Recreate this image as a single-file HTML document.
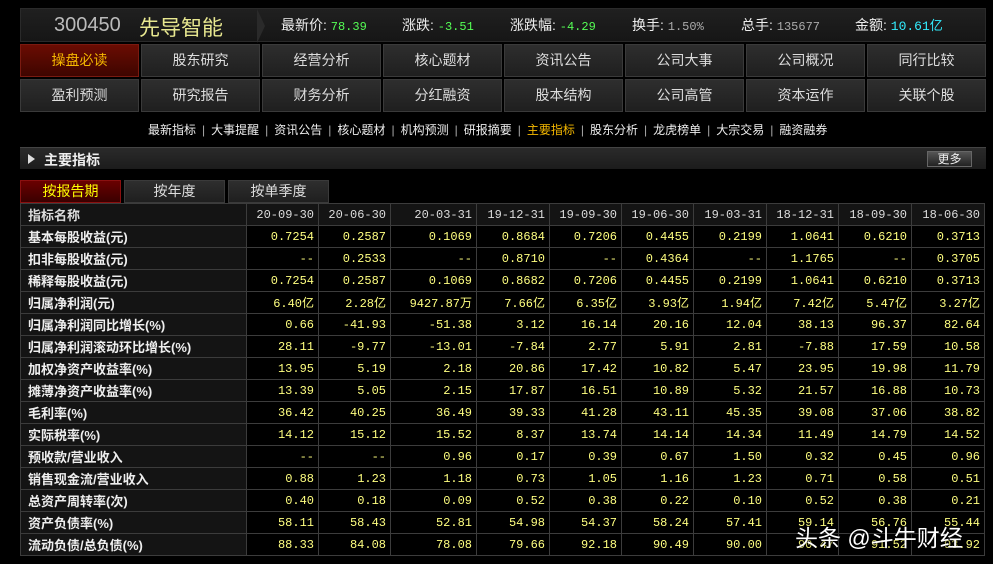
<!DOCTYPE html>
<html><head><meta charset="utf-8"><style>
*{margin:0;padding:0;box-sizing:border-box}
body{width:993px;height:564px;background:#000;overflow:hidden;font-family:"Liberation Sans","Noto Sans CJK SC",sans-serif;color:#ddd;position:relative}
.hdr{position:absolute;left:20px;top:8px;width:966px;height:34px;background:linear-gradient(#202020,#161616);border:1px solid #2a2a2a}
.code{position:absolute;left:33px;top:5px;font-size:20px;color:#bbb}
.name{position:absolute;left:118px;top:3px;font-size:21px;color:#e8e890}
.arrow{position:absolute;left:230px;top:0;width:0;height:0;border-top:17px solid transparent;border-bottom:17px solid transparent;border-left:8px solid #2a2a2a}
.q{position:absolute;top:15px;font-size:14px;color:#eee;white-space:nowrap}
.q b{font-weight:normal;font-family:"Liberation Mono",monospace;font-size:12px}
.btn{position:absolute;width:119px;height:33px;background:linear-gradient(#2e2e2e,#1f1f1f);border:1px solid #3a3a3a;color:#ddd;font-size:14px;text-align:center;line-height:31px}
.btn.act{background:linear-gradient(#6a0c02,#3e0500);border-color:#7a1a10;color:#f5b800}
.links{position:absolute;top:121px;left:148px;font-size:12px;color:#eee;white-space:nowrap}
.links span.s{color:#aaa;margin:0 6px}
.sec{position:absolute;left:20px;top:147px;width:966px;height:22px;background:linear-gradient(#2a2a2a,#1c1c1c);border-top:1px solid #444}
.sec .t{position:absolute;left:24px;top:2px;font-size:14px;font-weight:bold;color:#eee}
.sec .tri{position:absolute;left:8px;top:6px;border-top:5px solid transparent;border-bottom:5px solid transparent;border-left:7px solid #ddd}
.more{position:absolute;left:927px;top:151px;width:45px;height:16px;background:linear-gradient(#555,#222);border:1px solid #666;font-size:12px;color:#eee;text-align:center;line-height:14px}
.tab{position:absolute;top:180px;height:23px;width:101px;background:linear-gradient(#2e2e2e,#1f1f1f);border:1px solid #3a3a3a;font-size:14px;text-align:center;line-height:21px;color:#ddd}
.tab.act{background:linear-gradient(#6a0000,#3a0000);border-color:#8a1010;color:#ff0}
table{position:absolute;left:20px;top:203px;border-collapse:collapse;table-layout:fixed}
td{border:1px solid #3c3c3c;height:22px;font-size:12px;font-family:"Liberation Mono",monospace;color:#ffff80;text-align:right;padding-right:4px;background:#000;white-space:nowrap}
td.l{background:#141414;color:#eee;font-weight:bold;font-family:"Liberation Sans","Noto Sans CJK SC",sans-serif;font-size:13px;text-align:left;padding-left:7px}
tr.h td{color:#ddd;background:#141414}
.wm{position:absolute;left:795px;top:519px;font-size:23px;color:#fff;text-shadow:0 0 3px #000;white-space:nowrap}
</style></head><body>
<div class="hdr"><div class="code">300450</div><div class="name">先导智能</div><div class="arrow" style="left:236px"></div></div>
<div class="q" style="left:281px">最新价: <b style="color:#5f5">78.39</b></div>
<div class="q" style="left:402px">涨跌: <b style="color:#5f5">-3.51</b></div>
<div class="q" style="left:510px">涨跌幅: <b style="color:#5f5">-4.29</b></div>
<div class="q" style="left:632px">换手: <b style="color:#aaa">1.50%</b></div>
<div class="q" style="left:741px">总手: <b style="color:#aaa">135677</b></div>
<div class="q" style="left:855px">金额: <b style="color:#3ef;font-size:13px">10.61亿</b></div>

<div class="btn act" style="left:20px;top:44px">操盘必读</div>
<div class="btn" style="left:141px;top:44px">股东研究</div>
<div class="btn" style="left:262px;top:44px">经营分析</div>
<div class="btn" style="left:383px;top:44px">核心题材</div>
<div class="btn" style="left:504px;top:44px">资讯公告</div>
<div class="btn" style="left:625px;top:44px">公司大事</div>
<div class="btn" style="left:746px;top:44px">公司概况</div>
<div class="btn" style="left:867px;top:44px">同行比较</div>
<div class="btn" style="left:20px;top:79px">盈利预测</div>
<div class="btn" style="left:141px;top:79px">研究报告</div>
<div class="btn" style="left:262px;top:79px">财务分析</div>
<div class="btn" style="left:383px;top:79px">分红融资</div>
<div class="btn" style="left:504px;top:79px">股本结构</div>
<div class="btn" style="left:625px;top:79px">公司高管</div>
<div class="btn" style="left:746px;top:79px">资本运作</div>
<div class="btn" style="left:867px;top:79px">关联个股</div>

<div class="links">最新指标<span class="s">|</span>大事提醒<span class="s">|</span>资讯公告<span class="s">|</span>核心题材<span class="s">|</span>机构预测<span class="s">|</span>研报摘要<span class="s">|</span><span style="color:#f5b800">主要指标</span><span class="s">|</span>股东分析<span class="s">|</span>龙虎榜单<span class="s">|</span>大宗交易<span class="s">|</span>融资融券</div>

<div class="sec"><div class="tri"></div><div class="t">主要指标</div></div>
<div class="more">更多</div>

<div class="tab act" style="left:20px">按报告期</div>
<div class="tab" style="left:124px">按年度</div>
<div class="tab" style="left:228px">按单季度</div>

<table>
<colgroup><col style="width:226px"><col style="width:72px"><col style="width:72px"><col style="width:86px"><col style="width:73px"><col style="width:72px"><col style="width:72px"><col style="width:73px"><col style="width:72px"><col style="width:73px"><col style="width:73px"></colgroup>
<tr class="h"><td class="l">指标名称</td><td>20-09-30</td><td>20-06-30</td><td>20-03-31</td><td>19-12-31</td><td>19-09-30</td><td>19-06-30</td><td>19-03-31</td><td>18-12-31</td><td>18-09-30</td><td>18-06-30</td></tr>
<tr><td class="l">基本每股收益(元)</td><td>0.7254</td><td>0.2587</td><td>0.1069</td><td>0.8684</td><td>0.7206</td><td>0.4455</td><td>0.2199</td><td>1.0641</td><td>0.6210</td><td>0.3713</td></tr>
<tr><td class="l">扣非每股收益(元)</td><td>--</td><td>0.2533</td><td>--</td><td>0.8710</td><td>--</td><td>0.4364</td><td>--</td><td>1.1765</td><td>--</td><td>0.3705</td></tr>
<tr><td class="l">稀释每股收益(元)</td><td>0.7254</td><td>0.2587</td><td>0.1069</td><td>0.8682</td><td>0.7206</td><td>0.4455</td><td>0.2199</td><td>1.0641</td><td>0.6210</td><td>0.3713</td></tr>
<tr><td class="l">归属净利润(元)</td><td>6.40亿</td><td>2.28亿</td><td>9427.87万</td><td>7.66亿</td><td>6.35亿</td><td>3.93亿</td><td>1.94亿</td><td>7.42亿</td><td>5.47亿</td><td>3.27亿</td></tr>
<tr><td class="l">归属净利润同比增长(%)</td><td>0.66</td><td>-41.93</td><td>-51.38</td><td>3.12</td><td>16.14</td><td>20.16</td><td>12.04</td><td>38.13</td><td>96.37</td><td>82.64</td></tr>
<tr><td class="l">归属净利润滚动环比增长(%)</td><td>28.11</td><td>-9.77</td><td>-13.01</td><td>-7.84</td><td>2.77</td><td>5.91</td><td>2.81</td><td>-7.88</td><td>17.59</td><td>10.58</td></tr>
<tr><td class="l">加权净资产收益率(%)</td><td>13.95</td><td>5.19</td><td>2.18</td><td>20.86</td><td>17.42</td><td>10.82</td><td>5.47</td><td>23.95</td><td>19.98</td><td>11.79</td></tr>
<tr><td class="l">摊薄净资产收益率(%)</td><td>13.39</td><td>5.05</td><td>2.15</td><td>17.87</td><td>16.51</td><td>10.89</td><td>5.32</td><td>21.57</td><td>16.88</td><td>10.73</td></tr>
<tr><td class="l">毛利率(%)</td><td>36.42</td><td>40.25</td><td>36.49</td><td>39.33</td><td>41.28</td><td>43.11</td><td>45.35</td><td>39.08</td><td>37.06</td><td>38.82</td></tr>
<tr><td class="l">实际税率(%)</td><td>14.12</td><td>15.12</td><td>15.52</td><td>8.37</td><td>13.74</td><td>14.14</td><td>14.34</td><td>11.49</td><td>14.79</td><td>14.52</td></tr>
<tr><td class="l">预收款/营业收入</td><td>--</td><td>--</td><td>0.96</td><td>0.17</td><td>0.39</td><td>0.67</td><td>1.50</td><td>0.32</td><td>0.45</td><td>0.96</td></tr>
<tr><td class="l">销售现金流/营业收入</td><td>0.88</td><td>1.23</td><td>1.18</td><td>0.73</td><td>1.05</td><td>1.16</td><td>1.23</td><td>0.71</td><td>0.58</td><td>0.51</td></tr>
<tr><td class="l">总资产周转率(次)</td><td>0.40</td><td>0.18</td><td>0.09</td><td>0.52</td><td>0.38</td><td>0.22</td><td>0.10</td><td>0.52</td><td>0.38</td><td>0.21</td></tr>
<tr><td class="l">资产负债率(%)</td><td>58.11</td><td>58.43</td><td>52.81</td><td>54.98</td><td>54.37</td><td>58.24</td><td>57.41</td><td>59.14</td><td>56.76</td><td>55.44</td></tr>
<tr><td class="l">流动负债/总负债(%)</td><td>88.33</td><td>84.08</td><td>78.08</td><td>79.66</td><td>92.18</td><td>90.49</td><td>90.00</td><td>90.47</td><td>91.52</td><td>93.92</td></tr>
</table>
<div class="wm">头条 @斗牛财经</div>
</body></html>
